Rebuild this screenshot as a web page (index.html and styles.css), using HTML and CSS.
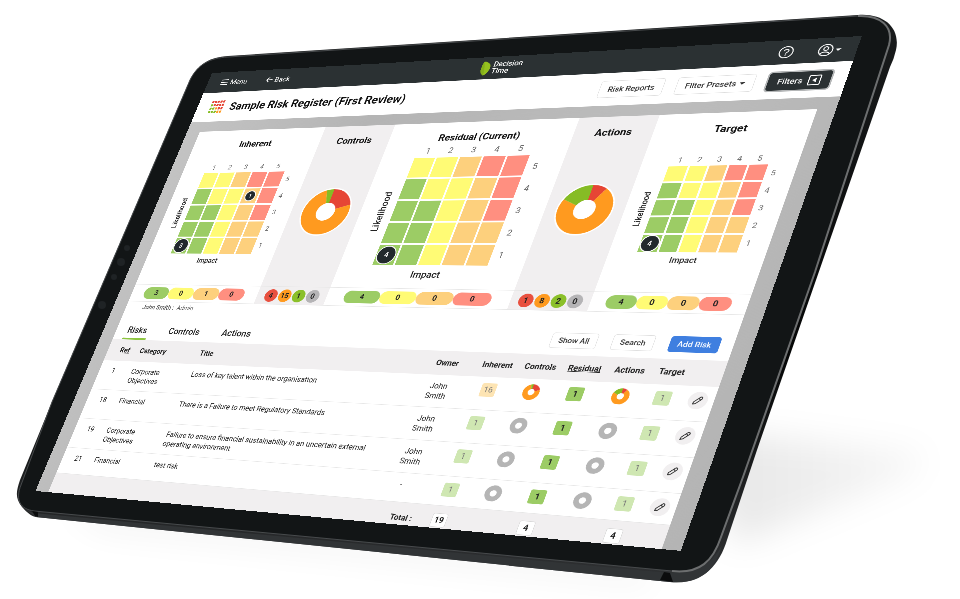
FILE: index.html
```
<!DOCTYPE html>
<html lang="en">
<head>
    <meta charset="UTF-8">
    <meta name="viewport" content="width=device-width, initial-scale=1.0">
    <title>Sample Risk Register</title>
    <link rel="stylesheet" href="styles.css">
</head>
<body>
    <div class="mockup" id="mockup">
        <svg class="device" viewBox="0 0 960 599" aria-hidden="true">
            <defs>
                <filter id="soft" x="-30%" y="-60%" width="160%" height="220%"><feGaussianBlur stdDeviation="16"/></filter>
                <linearGradient id="side" x1="0" y1="0" x2="0" y2="1">
                    <stop offset="0" stop-color="#1a1c1d"/>
                    <stop offset="0.6" stop-color="#050606"/>
                    <stop offset="1" stop-color="#303234"/>
                </linearGradient>
                <linearGradient id="floor" x1="0" y1="0" x2="1" y2="0">
                    <stop offset="0" stop-color="#000" stop-opacity="0.1"/>
                    <stop offset="1" stop-color="#000" stop-opacity="0.03"/>
                </linearGradient>
            </defs>
            <!-- floor shadow -->
            <path d="M700 430 L925 452 L915 475 L735 545 Z" fill="url(#floor)" filter="url(#soft)"/>
            <path d="M60 505 L650 570 L650 586 L100 530 Z" fill="#000" opacity="0.05" filter="url(#soft)"/>
            <!-- body edge -->
            <path d="M228 56 L858 15 C884 13 901 28 896 50 Q894 59 890 67 L757 450 L727 540 C719 566 702 585 670 582 L36 517 C30 516 26 511 22 507 C15 498 16 492 20 480 L52 402 L190 80 C198 64 210 57 228 56 Z" fill="url(#side)"/>
            <path d="M24 509 L34 513 L660 572 C690 575 708 570 722 545 C716 568 702 585 670 582 L36 517 Z" fill="#313436"/>
            <!-- front glass -->
            <path d="M228 57 L858 16 C880 15 894 26 889 45 L815 272 L743 477 L721 537 C713 561 700 574 672 571 L34 511 C20 509 15 500 21 485 L52 402 L190 80 C198 64 210 58 228 57 Z" fill="#121516" stroke="#484b4d" stroke-width="1"/>
            <path d="M858 16 C880 15 894 26 889 45 L815 272 L743 477 L721 537 C713 561 700 574 672 571" fill="none" stroke="#6c6e6f" stroke-width="2"/>
            <path d="M660 580 L664 572 L670 573 L673 582 Z" fill="#0b0c0d"/>
            <path d="M32 511 L38 512 L38 517 L35 516 Z" fill="#0b0c0d"/>
            <g fill="#1f2325">
                <circle cx="127" cy="248" r="3"/>
                <circle cx="121" cy="262" r="4"/>
                <circle cx="114" cy="277" r="3"/>
                <circle cx="102" cy="305" r="4"/>
            </g>
        </svg>

        <div class="screen" id="screen">
            <header class="topbar">
                <nav class="topbar-links">
                    <a href="#menu" class="menu-link">
                        <svg width="18" height="16" viewBox="0 0 18 16"><path d="M0 2h18M0 8h18M0 14h18" stroke="currentColor" stroke-width="2"/></svg>
                        Menu
                    </a>
                    <a href="#back">
                        <svg width="16" height="16" viewBox="0 0 16 16"><path d="M16 8H2M8 2L2 8l6 6" fill="none" stroke="currentColor" stroke-width="2"/></svg>
                        Back
                    </a>
                </nav>
                <a href="#home" class="logo">
                    <svg width="24" height="34" viewBox="0 0 24 34"><path d="M2 1 C12 2 19 8 19 17 C19 25 15 31 10 34 C3 30 0 24 0 17 C0 10 0 5 2 1 Z" fill="#95c11f"/><path d="M2 1 C6 12 9 22 10 34 C3 30 0 24 0 17 C0 10 0 5 2 1 Z" fill="#86b01b"/></svg>
                    <span>Decision<br>Time</span>
                </a>
                <div class="topbar-icons">
                    <svg width="26" height="26" viewBox="0 0 26 26" fill="none" stroke="currentColor" stroke-width="2"><circle cx="13" cy="13" r="12"/><path d="M9 10.500 C9 6 17 6 17 10.500 C17 13 13 13 13 16" /><circle cx="13" cy="19" r="1" fill="currentColor" stroke-width="1"/></svg>
                    <button class="user-button" aria-label="Account">
                        <svg width="26" height="26" viewBox="0 0 26 26" fill="none" stroke="currentColor" stroke-width="2"><circle cx="13" cy="13" r="12"/><circle cx="13" cy="10" r="4"/><path d="M5 21 C7 16 19 16 21 21"/></svg>
                        <span class="caret"></span>
                    </button>
                </div>
            </header>

            <div class="titlebar">
                <svg width="34" height="32" viewBox="0 0 32 30" id="registerIcon"></svg>
                <h1>Sample Risk Register (First Review)</h1>
                <button class="btn btn-large">Risk Reports</button>
                <button class="btn btn-large">Filter Presets <span class="caret"></span></button>
                <button class="btn btn-large btn-dark">Filters
                    <svg width="22" height="22" viewBox="0 0 22 22"><rect x="1" y="1" width="20" height="20" rx="2" fill="none" stroke="currentColor" stroke-width="2"/><path d="M14 6v10l-7-5z" fill="currentColor"/></svg>
                </button>
            </div>

            <main class="panel">
                <section class="summary">
                    <div class="summary-col">
                        <h2>Inherent</h2>
                        <div class="chart"><div class="heatmap small" data-markers='[[4,0,"3"],[1,3,"1"]]'></div></div>
                        <div class="pills"><span class="green">3</span><span class="yellow">0</span><span class="orange">1</span><span class="red">0</span></div>
                    </div>
                    <div class="summary-col shaded">
                        <h2>Controls</h2>
                        <div class="chart"><svg class="donut" viewBox="0 0 112 112" data-parts="20,75,5"></svg></div>
                        <div class="dots"><span class="dot-red">4</span><span class="dot-orange">15</span><span class="dot-green">1</span><span class="dot-grey">0</span></div>
                    </div>
                    <div class="summary-col">
                        <h2>Residual (Current)</h2>
                        <div class="chart"><div class="heatmap large" data-markers='[[4,0,"4"]]'></div></div>
                        <div class="pills"><span class="green">4</span><span class="yellow">0</span><span class="orange">0</span><span class="red">0</span></div>
                    </div>
                    <div class="summary-col shaded">
                        <h2>Actions</h2>
                        <div class="chart"><svg class="donut" viewBox="0 0 112 112" data-parts="9,73,18"></svg></div>
                        <div class="dots"><span class="dot-red">1</span><span class="dot-orange">8</span><span class="dot-green">2</span><span class="dot-grey">0</span></div>
                    </div>
                    <div class="summary-col">
                        <h2>Target</h2>
                        <div class="chart"><div class="heatmap small target" data-markers='[[4,0,"4"]]'></div></div>
                        <div class="pills"><span class="green">4</span><span class="yellow">0</span><span class="orange">0</span><span class="red">0</span></div>
                    </div>
                </section>

                <p class="user"><b>John Smith :</b> <span>Admin</span></p>

                <div class="toolbar">
                    <nav class="tabs">
                        <a href="#risks" class="active">Risks</a>
                        <a href="#controls">Controls</a>
                        <a href="#actions">Actions</a>
                    </nav>
                    <div class="toolbar-buttons">
                        <button class="btn">Show All</button>
                        <button class="btn">Search</button>
                        <button class="btn btn-blue">Add Risk</button>
                    </div>
                </div>

                <table class="risks">
                    <thead>
                        <tr>
                            <th class="ref"><u>Ref</u></th>
                            <th class="category">Category</th>
                            <th class="title">Title</th>
                            <th class="owner">Owner</th>
                            <th class="score">Inherent</th>
                            <th class="score">Controls</th>
                            <th class="score"><u>Residual</u></th>
                            <th class="score">Actions</th>
                            <th class="target-col">Target</th>
                            <th class="edit"></th>
                        </tr>
                    </thead>
                    <tbody>
                        <tr>
                            <td class="ref">1</td>
                            <td>Corporate<br>Objectives</td>
                            <td>Loss of key talent within the organisation</td>
                            <td class="mid">John<br>Smith</td>
                            <td class="mid"><span class="badge amber">16</span></td>
                            <td class="mid"><svg class="donut mini" viewBox="0 0 112 112" data-parts="20,75,5"></svg></td>
                            <td class="mid"><span class="badge solid">1</span></td>
                            <td class="mid"><svg class="donut mini" viewBox="0 0 112 112" data-parts="9,73,18"></svg></td>
                            <td class="mid"><span class="badge">1</span></td>
                            <td class="mid"><button class="pencil" aria-label="Edit"></button></td>
                        </tr>
                        <tr>
                            <td class="ref">18</td>
                            <td>Financial</td>
                            <td>There is a Failure to meet Regulatory Standards</td>
                            <td class="mid">John<br>Smith</td>
                            <td class="mid"><span class="badge">1</span></td>
                            <td class="mid"><svg class="donut mini" viewBox="0 0 112 112"></svg></td>
                            <td class="mid"><span class="badge solid">1</span></td>
                            <td class="mid"><svg class="donut mini" viewBox="0 0 112 112"></svg></td>
                            <td class="mid"><span class="badge">1</span></td>
                            <td class="mid"><button class="pencil" aria-label="Edit"></button></td>
                        </tr>
                        <tr>
                            <td class="ref">19</td>
                            <td>Corporate<br>Objectives</td>
                            <td>Failure to ensure financial sustainability in an uncertain external operating environment</td>
                            <td class="mid">John<br>Smith</td>
                            <td class="mid"><span class="badge">1</span></td>
                            <td class="mid"><svg class="donut mini" viewBox="0 0 112 112"></svg></td>
                            <td class="mid"><span class="badge solid">1</span></td>
                            <td class="mid"><svg class="donut mini" viewBox="0 0 112 112"></svg></td>
                            <td class="mid"><span class="badge">1</span></td>
                            <td class="mid"><button class="pencil" aria-label="Edit"></button></td>
                        </tr>
                        <tr>
                            <td class="ref">21</td>
                            <td>Financial</td>
                            <td>test risk</td>
                            <td class="mid">-</td>
                            <td class="mid"><span class="badge">1</span></td>
                            <td class="mid"><svg class="donut mini" viewBox="0 0 112 112"></svg></td>
                            <td class="mid"><span class="badge solid">1</span></td>
                            <td class="mid"><svg class="donut mini" viewBox="0 0 112 112"></svg></td>
                            <td class="mid"><span class="badge">1</span></td>
                            <td class="mid"><button class="pencil" aria-label="Edit"></button></td>
                        </tr>
                    </tbody>
                    <tfoot>
                        <tr>
                            <td colspan="3"></td>
                            <td class="total">Total :</td>
                            <td class="mid"><span class="badge white">19</span></td>
                            <td></td>
                            <td class="mid"><span class="badge white">4</span></td>
                            <td></td>
                            <td class="mid"><span class="badge white">4</span></td>
                            <td></td>
                        </tr>
                    </tfoot>
                </table>
            </main>
        </div>
    </div>

    <script src="script.js"></script>
</body>
</html>
```
FILE: styles.css
```
* {
    box-sizing: border-box;
}
body {
    margin: 0;
    background: white;
    font-family: Roboto, Arial, sans-serif;
    font-size: 13px;
    color: #222;
}
.mockup {
    position: relative;
    overflow: hidden;
}
.device {
    display: block;
    width: 100%;
}

/* The tablet screen, laid out flat and then projected onto the device */
.screen {
    position: absolute;
    top: 0;
    left: 0;
    width: 1366px;
    height: 1024px;
    overflow: hidden;
    transform-origin: 0 0;
    background: linear-gradient(100deg, #c4c4c4, #b4b4b4 30%, #bcbcbc 70%, #b4b4b4);
}
a {
    color: inherit;
    text-decoration: none;
}
button {
    font-family: inherit;
    cursor: pointer;
}
.caret {
    display: inline-block;
    border: 5px solid transparent;
    border-top-color: currentColor;
    border-bottom: 0;
    vertical-align: 4px;
}

.topbar {
    display: grid;
    grid-template-columns: 1fr auto 1fr;
    align-items: center;
    height: 52px;
    padding: 0 28px 0 34px;
    background: #2b3133;
    color: white;
}
.topbar-links {
    display: flex;
    gap: 46px;
    font-size: 17px;
}
.topbar-links a {
    display: flex;
    align-items: center;
    gap: 6px;
}
.logo {
    display: flex;
    align-items: center;
    font-size: 16px;
    font-weight: 500;
    line-height: 16px;
}
.topbar-icons {
    display: flex;
    justify-content: flex-end;
    gap: 44px;
}
.user-button {
    display: flex;
    align-items: center;
    gap: 4px;
    padding: 0;
    border: 0;
    background: none;
    color: white;
}

.titlebar {
    display: flex;
    align-items: center;
    gap: 24px;
    height: 74px;
    padding: 0 28px 0 33px;
    background: white;
}
.titlebar h1 {
    flex: 1;
    margin: 0 0 0 -8px;
    font-size: 26px;
    font-weight: 700;
    color: #111;
}
.btn {
    height: 32px;
    padding: 0 14px;
    border: 1px solid #dedede;
    border-radius: 5px;
    background: white;
    font-size: 15px;
    font-weight: 500;
    color: #333;
}
.btn-large {
    display: flex;
    align-items: center;
    gap: 6px;
    height: 38px;
    padding: 0 16px;
    font-size: 16px;
}
.btn-dark {
    gap: 10px;
    border-color: #2b3133;
    background: #2b3133;
    color: white;
    box-shadow: 0 0 0 3px #b5b7b8;
}
.btn-blue {
    border-color: #3f7fe0;
    background: #3f7fe0;
    color: white;
}

.panel {
    min-height: 873px;
    margin: 25px 33px 0;
    background: white;
}
.summary {
    display: grid;
    grid-template-columns: 308fr 160fr 390fr 156fr 286fr;
}
.summary-col.shaded {
    background: #f1eff0;
}
.summary h2 {
    margin: 0;
    padding-top: 22px;
    font-size: 21px;
    line-height: 26px;
    font-weight: 700;
    text-align: center;
    color: #111;
}
.chart {
    display: flex;
    align-items: center;
    justify-content: center;
    height: 310px;
    margin-bottom: 19px;
}

/* Heat map with axis labels around the coloured cells */
.heatmap {
    display: grid;
    grid-template-columns: 30px 197px 30px;
    grid-template-rows: 26px 197px 26px;
    font-size: 16px;
    font-weight: 500;
}
.heatmap.target {
    grid-template-columns: 30px 181px 30px;
    grid-template-rows: 26px 181px 26px;
}
.heatmap.large {
    grid-template-columns: 38px 245px 38px;
    grid-template-rows: 32px 245px 32px;
    font-size: 20px;
}
.cells {
    grid-area: 2 / 2;
    display: grid;
    grid-template: repeat(5, 1fr) / repeat(5, 1fr);
    gap: 4px;
}
.cell {
    display: flex;
    align-items: center;
    justify-content: center;
}
.scale-x {
    grid-area: 1 / 2;
    display: grid;
    grid-template-columns: repeat(5, 1fr);
    place-items: center;
}
.scale-y {
    grid-area: 2 / 3;
    display: grid;
    grid-template-rows: repeat(5, 1fr);
    place-items: center;
}
.scale-x, .scale-y {
    font-size: 15px;
    font-weight: 400;
    color: #666;
}
.large .scale-x, .large .scale-y {
    font-size: 18px;
}
.axis-x {
    grid-area: 3 / 2;
    align-self: end;
    text-align: center;
}
.axis-y {
    grid-area: 2 / 1;
    writing-mode: vertical-rl;
    transform: rotate(180deg);
    text-align: center;
}
.marker {
    width: 36px;
    height: 36px;
    flex: none;
    border: 2px solid white;
    border-radius: 50%;
    background: #22292d;
    color: white;
    font-size: 14px;
    line-height: 32px;
    text-align: center;
}
.large .marker {
    width: 42px;
    height: 42px;
    line-height: 38px;
    font-size: 16px;
}
.marker.lesser {
    width: 26px;
    height: 26px;
    line-height: 22px;
    font-size: 12px;
}
.green { background: #9ccc65; }
.yellow { background: #fffb75; }
.orange { background: #fdd07d; }
.red { background: #ff8f80; }

.donut {
    width: 112px;
    height: 112px;
}
.donut.mini {
    display: block;
    width: 34px;
    height: 34px;
    margin: -3px auto 0;
}
.pills, .dots {
    display: flex;
    align-items: center;
    justify-content: center;
    height: 42px;
    border-top: 1px solid #e6e6e6;
    border-bottom: 1px solid #e6e6e6;
    font-size: 16px;
    font-weight: 700;
    color: #222;
    text-align: center;
}
.pills span {
    width: 20%;
    border-radius: 14px;
    line-height: 28px;
}
.dots {
    gap: 3px;
}
.dots span {
    width: 29px;
    border-radius: 50%;
    line-height: 29px;
}
.dot-red { background: #e8503f; }
.dot-orange { background: #ff9a1f; }
.dot-green { background: #8bc02a; }
.dot-grey { background: #b5b4b6; }

.user {
    margin: 0;
    padding-left: 42px;
    font-size: 14px;
    line-height: 26px;
    color: #555;
}
.user b {
    margin-right: 4px;
    font-weight: 500;
}

.toolbar {
    display: flex;
    align-items: flex-end;
    justify-content: space-between;
    height: 65px;
    padding: 0 24px;
}
.tabs {
    display: flex;
    gap: 44px;
    font-size: 20px;
    font-weight: 500;
}
.tabs a {
    padding: 0 5px 7px;
    border-bottom: 4px solid transparent;
}
.tabs a.active {
    border-color: #8dc63f;
}
.toolbar-buttons {
    display: flex;
    gap: 28px;
    padding-bottom: 14px;
}

.risks {
    width: 100%;
    table-layout: fixed;
    border-collapse: collapse;
    font-size: 16px;
    line-height: 21px;
}
.risks thead, .risks tfoot {
    background: #f1eff0;
}
.risks th {
    height: 51px;
    padding: 0 10px;
    font-size: 16px;
    font-weight: 700;
    text-align: left;
}
.risks td {
    height: 60px;
    padding: 13px 10px;
    border-bottom: 1px solid #e6e6e6;
    vertical-align: top;
}
.risks .ref {
    width: 71px;
    padding-left: 31px;
    padding-right: 0;
}
.risks .category { width: 148px; }
.risks .owner { width: 118px; padding: 0; text-align: center; }
.risks .score { width: 84px; padding: 0; text-align: center; }
.risks .target-col { width: 68px; padding: 0; text-align: center; }
.risks .edit { width: 57px; }
.risks .mid {
    padding: 13px 0;
    text-align: center;
}
.risks tfoot td {
    border: 0;
}
.risks .total {
    padding: 20px 12px 0 0;
    text-align: right;
    font-weight: 700;
}
.badge {
    display: inline-block;
    width: 30px;
    height: 28px;
    border-radius: 4px;
    background: #cfe7b2;
    color: #777;
    font-size: 16px;
    line-height: 28px;
}
.badge.amber {
    background: #fde4b3;
}
.badge.solid {
    background: #9ccc65;
    color: #222;
    font-weight: 700;
}
.badge.white {
    margin-top: 2px;
    border: 1px solid #d8d8d8;
    background: white;
    color: #222;
    font-weight: 700;
    line-height: 26px;
}
.pencil {
    width: 34px;
    height: 34px;
    padding: 9px;
    margin-top: -2px;
    border: 0;
    border-radius: 50%;
    background: #f1eff0;
    vertical-align: top;
}
.pencil svg {
    display: block;
}
```
FILE: script.js
```
const colors = { g: 'green', y: 'yellow', o: 'orange', r: 'red' };
const riskMap = ['yyorr', 'gyyor', 'ggyor', 'ggyoo', 'ggyoo'];

// Screen corners on the 960 wide device drawing: top left, top right, bottom right, bottom left
const corners = [[212, 73], [862, 36], [681, 551], [35.5, 491]];

function drawHeatmap(el) {
    const markers = JSON.parse(el.dataset.markers);
    let cells = '';
    riskMap.forEach((row, r) => {
        [...row].forEach((key, c) => {
            const m = markers.find(m => m[0] === r && m[1] === c);
            const marker = m ? `<span class="marker ${r < 4 ? 'lesser' : ''}">${m[2]}</span>` : '';
            cells += `<div class="cell ${colors[key]}">${marker}</div>`;
        });
    });
    el.innerHTML = `
        <div class="scale-x"><span>1</span><span>2</span><span>3</span><span>4</span><span>5</span></div>
        <div class="axis-y">Likelihood</div>
        <div class="cells">${cells}</div>
        <div class="scale-y"><span>5</span><span>4</span><span>3</span><span>2</span><span>1</span></div>
        <div class="axis-x">Impact</div>`;
}

function drawDonut(svg) {
    const parts = svg.dataset.parts ? svg.dataset.parts.split(',').map(Number) : [100];
    const fills = parts.length > 1 ? ['#e64535', '#ff9a1f', '#86bc25'] : ['#b5b5b5'];
    let start = 0;
    let html = '<circle cx="56" cy="56" r="56" fill="white"/>';
    parts.forEach((part, i) => {
        html += `<circle cx="56" cy="56" r="37" fill="none" stroke="${fills[i]}" stroke-width="32" pathLength="100"
            stroke-dasharray="${part} ${100 - part}" stroke-dashoffset="${-start}" transform="rotate(-90 56 56)"/>`;
        start += part;
    });
    svg.innerHTML = html;
}

function drawRegisterIcon(svg) {
    const dots = ['rrrrr', 'grrrr', 'ggorr', 'gggoo'];
    const fills = { r: '#e64535', g: '#86bc25', o: '#ff9a1f' };
    let html = '';
    dots.forEach((row, y) => [...row].forEach((key, x) => {
        html += `<rect x="${x * 6.5}" y="${y * 8}" width="5" height="5" rx="1" fill="${fills[key]}"/>`;
    }));
    svg.innerHTML = html;
}

// Map the flat screen onto the four corners
function projectScreen() {
    const screen = document.getElementById('screen');
    const k = document.getElementById('mockup').clientWidth / 960;
    const [[x0, y0], [x1, y1], [x2, y2], [x3, y3]] = corners.map(p => [p[0] * k, p[1] * k]);
    const w = screen.offsetWidth;
    const h = screen.offsetHeight;
    const sx = x0 - x1 + x2 - x3;
    const sy = y0 - y1 + y2 - y3;
    const det = (x1 - x2) * (y3 - y2) - (x3 - x2) * (y1 - y2);
    const g = (sx * (y3 - y2) - (x3 - x2) * sy) / det;
    const i = ((x1 - x2) * sy - sx * (y1 - y2)) / det;
    const m = [
        (x1 - x0 + g * x1) / w, (y1 - y0 + g * y1) / w, 0, g / w,
        (x3 - x0 + i * x3) / h, (y3 - y0 + i * y3) / h, 0, i / h,
        0, 0, 1, 0,
        x0, y0, 0, 1
    ];
    screen.style.transform = `matrix3d(${m.map(n => n.toFixed(10)).join(',')})`;
}

document.querySelectorAll('.heatmap').forEach(drawHeatmap);
document.querySelectorAll('.donut').forEach(drawDonut);
document.querySelectorAll('.pencil').forEach(button => {
    button.innerHTML = '<svg width="16" height="16" viewBox="0 0 18 18" fill="none" stroke="#333" stroke-width="2"><path d="M1 17l1-5L12 2q2-2 4 0t0 4L6 16zM10 4l4 4"/></svg>';
});
drawRegisterIcon(document.getElementById('registerIcon'));
projectScreen();
window.addEventListener('resize', projectScreen);
```
